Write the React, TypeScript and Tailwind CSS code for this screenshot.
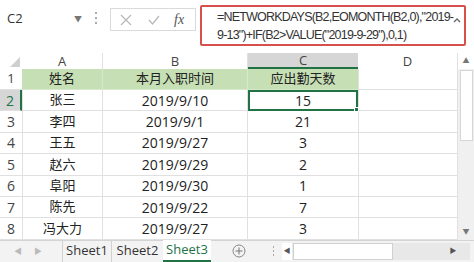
import React from 'react';

const rows = [
  { name: '张三', date: '2019/9/10', days: '15' },
  { name: '李四', date: '2019/9/1', days: '21' },
  { name: '王五', date: '2019/9/27', days: '3' },
  { name: '赵六', date: '2019/9/29', days: '2' },
  { name: '阜阳', date: '2019/9/30', days: '1' },
  { name: '陈先', date: '2019/9/22', days: '7' },
  { name: '冯大力', date: '2019/9/27', days: '3' },
];

const font = "font-['Open_Sans','Noto_Sans_CJK_SC',sans-serif]";

const App: React.FC = () => {
  return (
    <div className={`w-[474px] h-[262px] overflow-hidden bg-white text-[#222] ${font}`}>
      {/* formula bar */}
      <div className="flex h-[53px] items-start bg-white">
        <div className="mt-[8px] flex h-[22px] w-[88px] items-center justify-between pl-[7px] pr-[6px] text-[13px] text-[#333]">
          <span>C2</span>
          <span className="text-[8px] text-[#777]">▼</span>
        </div>
        <div className="mt-[12px] ml-[6px] flex w-[4px] flex-col items-center gap-[3px]">
          <span className="h-[2px] w-[2px] bg-[#aaa]" />
          <span className="h-[2px] w-[2px] bg-[#aaa]" />
          <span className="h-[2px] w-[2px] bg-[#aaa]" />
        </div>
        <div className="mt-[8px] ml-[12px] flex h-[23px] w-[86px] items-center border border-[#dadada] text-[#b5b5b5]">
          <svg width="12" height="12" viewBox="0 0 12 12" className="ml-[9px]">
            <path d="M1 1 L11 11 M11 1 L1 11" stroke="#b8b8b8" strokeWidth="1.2" />
          </svg>
          <svg width="12" height="10" viewBox="0 0 12 10" className="ml-[16px]">
            <path d="M1 5 L4.5 9 L11 1" stroke="#b8b8b8" strokeWidth="1.2" fill="none" />
          </svg>
          <span className="ml-[14px] font-['Liberation_Serif',serif] text-[14px] italic text-[#555]">fx</span>
        </div>
        <div className="mt-[5px] ml-[4px] flex h-[41px] w-[266px] rounded-[2px] border-2 border-[#d6504c] pl-[15px] pt-[1px] font-['Liberation_Sans',sans-serif] text-[12.5px] leading-[18px] tracking-[-0.8px] text-[#333]">
          <div className="flex-1 whitespace-nowrap">
            <div>=NETWORKDAYS(B2,EOMONTH(B2,0),"2019-</div>
            <div>9-13")+IF(B2&gt;VALUE("2019-9-29"),0,1)</div>
          </div>
          <svg width="8" height="6" viewBox="0 0 8 6" className="mr-[6px] mt-[9px] shrink-0">
            <path d="M1 5 L4 2 L7 5" stroke="#666" strokeWidth="1.3" fill="none" />
          </svg>
        </div>
      </div>

      {/* grid */}
      <div className="flex">
        <div className="flex flex-col">
          {/* header row */}
          <div className="flex h-[16px] text-[13px] leading-[16px] text-[#444]">
            <div className="relative w-[22px] bg-white">
              <svg width="10" height="10" viewBox="0 0 10 10" className="absolute bottom-[2px] right-[2px]">
                <path d="M10 0 L10 10 L0 10 Z" fill="#cfcfcf" />
              </svg>
            </div>
            <div className="w-[81px] border-r border-[#e0e0e0] bg-white text-center">A</div>
            <div className="w-[145px] border-r border-[#e0e0e0] bg-white text-center">B</div>
            <div className="w-[110px] border-b-2 border-[#217346] bg-[#d6d6d6] text-center leading-[14px]">C</div>
            <div className="w-[99px] bg-white text-center">D</div>
          </div>
          {/* row 1 */}
          <div className="flex h-[21px] items-center text-[13px]">
            <div className="flex h-full w-[22px] items-center justify-center border-b border-[#e0e0e0] text-[#444]">1</div>
            <div className="flex h-full w-[81px] items-center justify-center border-r border-b border-[#d8e8cc] bg-[#c6dfb4]">姓名</div>
            <div className="flex h-full w-[145px] items-center justify-center border-r border-b border-[#d8e8cc] bg-[#c6dfb4]">本月入职时间</div>
            <div className="flex h-full w-[110px] items-center justify-center border-b border-[#d8e8cc] bg-[#c6dfb4]">应出勤天数</div>
            <div className="h-full w-[99px] border-l border-b border-[#e0e0e0]" />
          </div>
          {rows.map((r, i) => (
            <div key={i} className="flex h-[21.4px] items-center text-[14px]">
              <div
                className={
                  i === 0
                    ? 'flex h-full w-[22px] items-center justify-center border-r-2 border-b border-r-[#217346] border-b-[#e0e0e0] bg-[#d6d6d6] text-[#217346]'
                    : 'flex h-full w-[22px] items-center justify-center border-b border-[#e0e0e0] text-[#444]'
                }
              >
                {i + 2}
              </div>
              <div className="flex h-full w-[81px] items-center justify-center border-l border-r border-b border-[#e0e0e0] text-[13px]">{r.name}</div>
              <div className="flex h-full w-[145px] items-center justify-center border-r border-b border-[#e0e0e0]">{r.date}</div>
              <div
                className={
                  i === 0
                    ? 'relative flex h-full w-[110px] items-center justify-center border-2 border-[#217346]'
                    : 'flex h-full w-[110px] items-center justify-center border-b border-[#e0e0e0]'
                }
              >
                {r.days}
                {i === 0 && <span className="absolute -bottom-[3px] -right-[3px] h-[5px] w-[5px] border border-white bg-[#217346]" />}
              </div>
              <div className="h-full w-[99px] border-l border-b border-[#e0e0e0]" />
            </div>
          ))}
        </div>
        {/* vertical scrollbar */}
        <div className="flex w-[17px] flex-col items-center border-l border-[#e0e0e0] bg-[#f0f0f0]">
          <div className="flex h-[16px] w-full items-center justify-center bg-white text-[7px] text-[#777]">▲</div>
          <div className="mt-[1px] h-[71px] w-[13px] border border-[#d6d6d6] bg-white" />
          <div className="flex-1" />
          <div className="flex h-[14px] w-full items-center justify-center text-[7px] text-[#777]">▼</div>
        </div>
      </div>

      {/* sheet tabs */}
      <div className="flex h-[22px] items-stretch border-t border-[#d4d4d4] bg-[#f3f3f3] text-[13px] text-[#333]">
        <div className="flex w-[62px] items-center text-[8px] text-[#bbb]">
          <span className="ml-[14px]">◀</span>
          <span className="ml-[12px]">▶</span>
        </div>
        <div className="flex w-[49px] items-center justify-center border-l border-[#d0d0d0]">Sheet1</div>
        <div className="flex w-[52px] items-center justify-center border-l border-[#d0d0d0]">Sheet2</div>
        <div className="-mt-px flex w-[48px] items-center justify-center border-b-2 border-[#217346] bg-white text-[#217346]">Sheet3</div>
        <div className="flex w-[55px] items-center justify-center">
          <svg width="14" height="14" viewBox="0 0 14 14">
            <circle cx="7" cy="7" r="6" fill="none" stroke="#888" strokeWidth="1" />
            <path d="M7 3.5 V10.5 M3.5 7 H10.5" stroke="#777" strokeWidth="1" />
          </svg>
        </div>
        <div className="flex w-[14px] flex-col items-center justify-center gap-[2px]">
          <span className="h-[2px] w-[1px] bg-[#aaa]" />
          <span className="h-[2px] w-[1px] bg-[#aaa]" />
          <span className="h-[2px] w-[1px] bg-[#aaa]" />
        </div>
        <div className="my-[2px] ml-[2px] flex flex-1 items-center bg-[#e8e8e8]">
          <div className="flex h-full w-[10px] items-center justify-center bg-white text-[7px] text-[#555]">◀</div>
          <div className="ml-[1px] h-full w-[100px] border border-[#d0d0d0] bg-white" />
          <div className="flex-1" />
          <div className="mr-[10px] flex h-full w-[14px] items-center justify-center text-[7px] text-[#555]">▶</div>
        </div>
        <div className="w-[4px]" />
      </div>
    </div>
  );
};

export default App;
